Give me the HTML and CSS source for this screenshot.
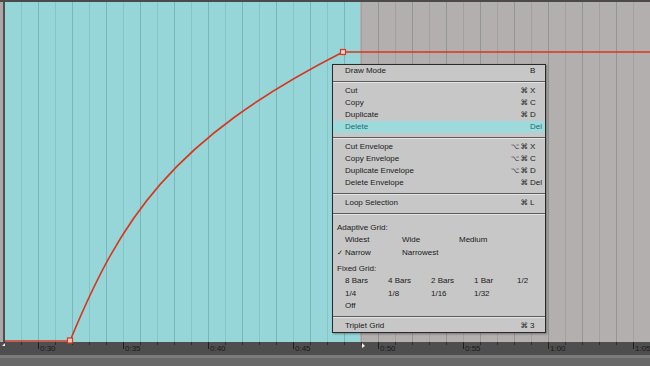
FILE: index.html
```html
<!DOCTYPE html>
<html>
<head>
<meta charset="utf-8">
<link rel="stylesheet" href="styles.css">
</head>
<body>
<div class="app">
  <div class="topbar"></div>
  <div class="arrange">
    <div class="gutter"></div>
    <div class="edge"></div>
    <div class="lane"></div>
  </div>
  <div class="ruler">
    <div class="marks">
      <div class="mark"><span class="tick"></span><span class="lbl">0:30</span></div>
      <div class="mark"><span class="tick"></span><span class="lbl">0:35</span></div>
      <div class="mark"><span class="tick"></span><span class="lbl">0:40</span></div>
      <div class="mark"><span class="tick"></span><span class="lbl">0:45</span></div>
      <div class="mark"><span class="tick"></span><span class="lbl">0:50</span></div>
      <div class="mark"><span class="tick"></span><span class="lbl">0:55</span></div>
      <div class="mark"><span class="tick"></span><span class="lbl">1:00</span></div>
      <div class="mark"><span class="tick"></span><span class="lbl">1:05</span></div>
    </div>
  </div>
  <div class="strip1"></div>
  <div class="strip2"></div>

  <svg class="env" width="650" height="366" viewBox="0 0 650 366">
    <path d="M5 341 H70 C120 220 170 140 343 52 H650" fill="none" stroke="#d8361f" stroke-width="1.6"/>
    <rect x="340.5" y="49.5" width="5" height="5" fill="#e9cfc8" stroke="#d8361f" stroke-width="1.2"/>
    <rect x="67.5" y="338" width="5" height="5" fill="#e9cfc8" stroke="#d8361f" stroke-width="1.2"/>
    <polygon points="2,346 5,343 5,346" fill="#f2f2f2"/>
    <polygon points="362,343 362,348 365,346" fill="#f2f2f2"/>
  </svg>

  <div class="menu">
    <div class="item"><span class="label">Draw Mode</span><span class="mod"></span><span class="key">B</span></div>
    <div class="sep"></div>
    <div class="item"><span class="label">Cut</span><span class="mod">⌘</span><span class="key">X</span></div>
    <div class="item"><span class="label">Copy</span><span class="mod">⌘</span><span class="key">C</span></div>
    <div class="item"><span class="label">Duplicate</span><span class="mod">⌘</span><span class="key">D</span></div>
    <div class="item active"><span class="label">Delete</span><span class="mod"></span><span class="key">Del</span></div>
    <div class="sep"></div>
    <div class="item"><span class="label">Cut Envelope</span><span class="mod">⌥⌘</span><span class="key">X</span></div>
    <div class="item"><span class="label">Copy Envelope</span><span class="mod">⌥⌘</span><span class="key">C</span></div>
    <div class="item"><span class="label">Duplicate Envelope</span><span class="mod">⌥⌘</span><span class="key">D</span></div>
    <div class="item"><span class="label">Delete Envelope</span><span class="mod">⌘</span><span class="key">Del</span></div>
    <div class="sep"></div>
    <div class="item"><span class="label">Loop Selection</span><span class="mod">⌘</span><span class="key">L</span></div>
    <div class="sep"></div>
    <div class="gridsec">
      <div class="head">Adaptive Grid:</div>
      <div class="opts adaptive">
        <span>Widest</span><span>Wide</span><span>Medium</span>
        <span><i class="check">✓</i>Narrow</span><span>Narrowest</span>
      </div>
      <div class="head fixedhead">Fixed Grid:</div>
      <div class="opts fixed">
        <span>8 Bars</span><span>4 Bars</span><span>2 Bars</span><span>1 Bar</span><span>1/2</span>
        <span class="tall">1/4</span><span class="tall">1/8</span><span class="tall">1/16</span><span class="tall">1/32</span><span class="tall"></span>
        <span>Off</span>
      </div>
    </div>
    <div class="sep"></div>
    <div class="item"><span class="label">Triplet Grid</span><span class="mod">⌘</span><span class="key">3</span></div>
  </div>
</div>
</body>
</html>
```

FILE: styles.css
```css
html, body {
  margin: 0;
  padding: 0;
  background: #666;
}
.app {
  position: relative;
  width: 650px;
  height: 366px;
  overflow: hidden;
  display: flex;
  flex-direction: column;
  font-family: "Liberation Sans", Arial, "DejaVu Sans", sans-serif;
}
.topbar {
  height: 2px;
  background: #4a4a4a;
  flex: 0 0 auto;
}
.arrange {
  height: 340px;
  display: flex;
  flex: 0 0 auto;
}
.gutter {
  width: 3px;
  background: #aca6a6;
}
.edge {
  width: 2px;
  background: #4f4f4f;
}
.lane {
  flex: 1;
  background:
    linear-gradient(to right, rgba(0, 40, 45, 0.10) 0 1px, transparent 1px 17px, rgba(0, 40, 45, 0.19) 17px 18px, transparent 18px) 16px 0 / 34px 100% repeat-x,
    linear-gradient(to right, #96d6d8 0 355px, #b3afaf 355px);
}
.ruler {
  height: 13px;
  flex: 0 0 auto;
  background:
    linear-gradient(to right, #2c2c2c 0 1px, transparent 1px) 21px 0 / 17px 3px repeat-x,
    #4e4e4e;
  overflow: hidden;
}
.marks {
  display: flex;
  padding-left: 38px;
}
.mark {
  flex: 0 0 85px;
  display: flex;
  align-items: flex-start;
}
.tick {
  width: 1px;
  height: 6px;
  margin-top: 1px;
  background: #1e1e1e;
}
.lbl {
  margin-left: 1px;
  margin-top: 3px;
  font-size: 8px;
  line-height: 8px;
  color: #1a1a1a;
}
.strip1 {
  height: 3px;
  background: #7c7c7c;
  flex: 0 0 auto;
}
.strip2 {
  flex: 1;
  background: #686868;
}
.env {
  position: absolute;
  left: 0;
  top: 0;
}
.menu {
  position: absolute;
  left: 332px;
  top: 64px;
  width: 214px;
  box-sizing: border-box;
  border: 1px solid #2a2a2a;
  background: #c7c7c7;
  box-shadow: 1px 1px 2px rgba(0, 0, 0, 0.35);
  font-size: 8px;
  color: #202020;
}
.item {
  display: grid;
  grid-template-columns: 1fr auto 15px;
  align-items: center;
  height: 12px;
  line-height: 12px;
  padding-left: 12px;
}
.item.active {
  background: #9edadb;
  color: #1c6d72;
}
.mod {
  font-family: "DejaVu Sans", sans-serif;
  font-size: 7.5px;
  letter-spacing: 1px;
  padding-right: 1px;
}
.key {
  white-space: nowrap;
}
.sep {
  margin: 4px 0 2px;
  border-top: 1px solid #5c5c5c;
  border-bottom: 1px solid #e3e3e3;
}
.gridsec {
  padding-top: 5px;
}
.head {
  height: 11px;
  line-height: 11px;
  padding-left: 4px;
}
.fixedhead {
  margin-top: 4px;
  height: 12px;
  line-height: 12px;
}
.opts {
  display: grid;
  padding-left: 12px;
}
.adaptive {
  grid-template-columns: repeat(3, 57px);
  grid-auto-rows: 13px;
  line-height: 13px;
}
.fixed {
  grid-template-columns: repeat(5, 43px);
  grid-template-rows: 12px 13px 12px;
  line-height: 12px;
}
.fixed .tall {
  line-height: 13px;
}
.check {
  font-style: normal;
  font-family: "DejaVu Sans", sans-serif;
  font-size: 7px;
  display: inline-block;
  width: 8px;
  margin-left: -8px;
}
```
